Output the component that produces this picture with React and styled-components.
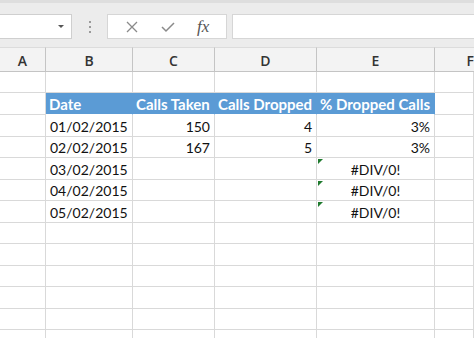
import React from "react";
import styled, { createGlobalStyle, css } from "styled-components";

const Global = createGlobalStyle`
  html, body { margin: 0; padding: 0; background: #fff; }
  body { font-family: Lato, "Open Sans", sans-serif; overflow: hidden; }
`;

const Page = styled.div`
  width: 474px;
  height: 338px;
  overflow: hidden;
  background: #fff;
`;

const FormulaBar = styled.div`
  height: 47px;
  box-sizing: border-box;
  background: #ececec;
  border-top: 3px solid #dedede;
  padding-top: 11px;
  display: flex;
  align-items: flex-start;
`;

const NameBox = styled.div`
  width: 72px;
  height: 25px;
  box-sizing: border-box;
  background: #fff;
  border: 1px solid #cfcfcf;
  border-left: none;
  display: flex;
  align-items: center;
  justify-content: flex-end;
  padding-right: 7px;
`;

const Caret = styled.span`
  width: 0;
  height: 0;
  border-left: 3px solid transparent;
  border-right: 3px solid transparent;
  border-top: 3px solid #555;
`;

const Grip = styled.div`
  width: 35px;
  height: 25px;
  display: flex;
  flex-direction: column;
  align-items: center;
  justify-content: center;
  gap: 3px;
`;

const Dot = styled.span`
  width: 2px;
  height: 2px;
  background: #9a9a9a;
`;

const ButtonBox = styled.div`
  width: 120px;
  height: 25px;
  box-sizing: border-box;
  background: #fff;
  border: 1px solid #d6d6d6;
  display: flex;
  align-items: center;
  justify-content: space-around;
  padding: 0 6px;
`;

const Fx = styled.span`
  font-family: "Liberation Serif", serif;
  font-style: italic;
  font-size: 17px;
  color: #555;
  line-height: 1;
`;

const FormulaInput = styled.div`
  flex: 1;
  margin-left: 5px;
  height: 25px;
  box-sizing: border-box;
  background: #fff;
  border: 1px solid #d6d6d6;
  border-right: none;
`;

const Sheet = styled.div`
  display: grid;
  grid-template-columns: 46px 87px 82px 102px 118px 1fr;
  grid-template-rows: 25px 21px 22px 22px 21px 22px 21px 22px 21px 22px 21px 22px 21px 22px;
`;

const ColHead = styled.div`
  box-sizing: border-box;
  background: #f3f3f3;
  border-top: 1px solid #dcdcdc;
  border-right: 1px solid #c4c4c4;
  border-bottom: 1px solid #c4c4c4;
  display: flex;
  align-items: center;
  justify-content: center;
  font-family: "Open Sans", sans-serif;
  font-size: 14px;
  font-weight: 600;
  color: #333;
  padding-top: 1px;
  ${(p) => p.$last && css`justify-content: flex-end; border-right: none;`}
`;

const Cell = styled.div`
  position: relative;
  box-sizing: border-box;
  border-right: 1px solid #d9d9d9;
  border-bottom: 1px solid #d9d9d9;
  display: flex;
  align-items: center;
  padding: 1px 4px 0 4px;
  font-size: 14px;
  color: #111;
  white-space: nowrap;
  justify-content: ${(p) => (p.$align === "right" ? "flex-end" : p.$align === "center" ? "center" : "flex-start")};
  ${(p) =>
    p.$head &&
    css`
      background: #5b9bd5;
      color: #fff;
      font-size: 15px;
      font-weight: 700;
      border-right-color: #5b9bd5;
      border-bottom-color: #fff;
      padding-left: 3px;
    `}
  ${(p) =>
    p.$error &&
    css`
      &::before {
        content: "";
        position: absolute;
        left: 1px;
        top: 1px;
        width: 0;
        height: 0;
        border-top: 5px solid #1f7a2e;
        border-right: 5px solid transparent;
      }
    `}
`;

const cols = ["A", "B", "C", "D", "E", "F"];

const header = ["Date", "Calls Taken", "Calls Dropped", "% Dropped Calls"];

const data = [
  ["01/02/2015", "150", "4", "3%", false],
  ["02/02/2015", "167", "5", "3%", false],
  ["03/02/2015", "", "", "#DIV/0!", true],
  ["04/02/2015", "", "", "#DIV/0!", true],
  ["05/02/2015", "", "", "#DIV/0!", true],
];

function Row({ children }) {
  return <>{children}</>;
}

export default function App() {
  return (
    <Page>
      <Global />
      <FormulaBar>
        <NameBox>
          <Caret />
        </NameBox>
        <Grip>
          <Dot />
          <Dot />
          <Dot />
        </Grip>
        <ButtonBox>
          <svg width="14" height="14" viewBox="0 0 14 14">
            <path d="M2 2 L12 12 M12 2 L2 12" stroke="#8a8a8a" strokeWidth="1.3" fill="none" />
          </svg>
          <svg width="16" height="14" viewBox="0 0 16 14">
            <path d="M2 7 L6 11 L14 3" stroke="#8a8a8a" strokeWidth="1.5" fill="none" />
          </svg>
          <Fx>fx</Fx>
        </ButtonBox>
        <FormulaInput />
      </FormulaBar>
      <Sheet>
        {cols.map((c, i) => (
          <ColHead key={c} $last={i === cols.length - 1}>
            {c}
          </ColHead>
        ))}
        {cols.map((c) => (
          <Cell key={"e" + c} />
        ))}
        <Cell />
        {header.map((h) => (
          <Cell key={h} $head>
            {h}
          </Cell>
        ))}
        <Cell />
        {data.map((r, ri) => (
          <Row key={ri}>
            <Cell />
            <Cell>{r[0]}</Cell>
            <Cell $align="right">{r[1]}</Cell>
            <Cell $align="right">{r[2]}</Cell>
            <Cell $align={r[4] ? "center" : "right"} $error={r[4]}>
              {r[3]}
            </Cell>
            <Cell />
          </Row>
        ))}
        {Array.from({ length: 6 }).map((_, ri) =>
          cols.map((c) => <Cell key={"x" + ri + c} />)
        )}
      </Sheet>
    </Page>
  );
}
